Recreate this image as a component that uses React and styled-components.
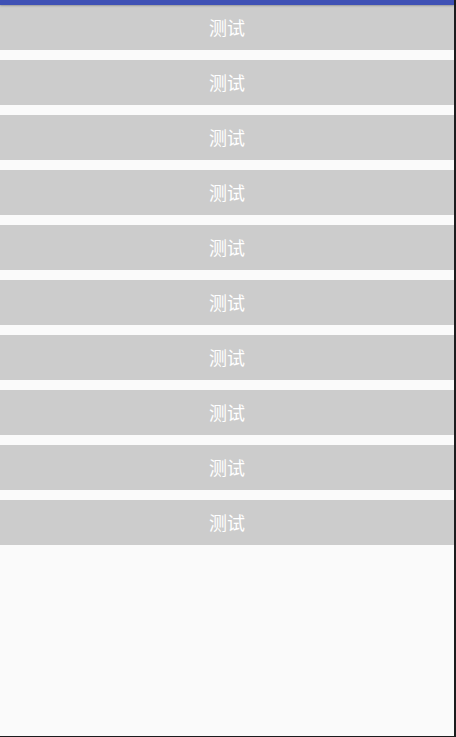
import React from 'react'
import styled, {createGlobalStyle} from 'styled-components'

const GlobalStyle = createGlobalStyle`
  html, body {
    margin: 0;
    padding: 0;
    background: #1c1c1e;
  }
  #root {
    width: 456px;
    height: 737px;
  }
`

const Screen = styled.div`
  box-sizing: border-box;
  width: 456px;
  height: 737px;
  background: #fafafa;
  border-right: 2px solid #1c1c1e;
  border-bottom: 1px solid #1c1c1e;
  display: flex;
  flex-direction: column;
  font-family: "Noto Sans CJK SC", "Noto Sans", sans-serif;
`

const StatusBar = styled.div`
  height: 5px;
  flex-shrink: 0;
  background: #3f51b5;
  box-shadow: 0 1px 2px rgba(0, 0, 0, 0.25);
  position: relative;
  z-index: 1;
`

const List = styled.div`
  display: flex;
  flex-direction: column;
  gap: 10px;
`

const Item = styled.button`
  box-sizing: border-box;
  height: 45px;
  border: none;
  margin: 0;
  padding: 0 0 2px;
  background: #cccccc;
  color: #ffffff;
  font-family: inherit;
  font-size: 18px;
  display: flex;
  align-items: center;
  justify-content: center;
`

export default function App() {
  const items = Array.from({length: 10}, (_, i) => i)
  return (
    <>
      <GlobalStyle/>
      <Screen>
        <StatusBar/>
        <List>
          {items.map(i => (
            <Item key={i}>测试</Item>
          ))}
        </List>
      </Screen>
    </>
  )
}
